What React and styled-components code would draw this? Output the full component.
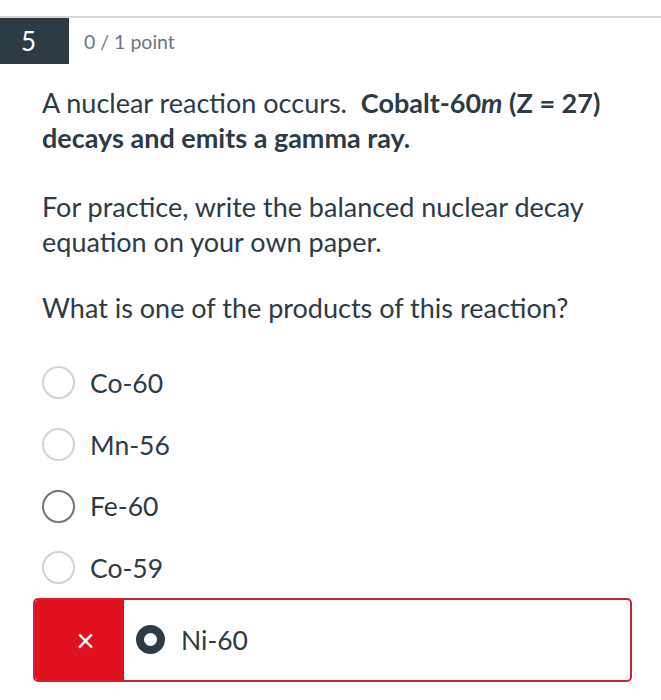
import React from 'react';
import styled, { createGlobalStyle } from 'styled-components';

const GlobalStyle = createGlobalStyle`
  body {
    margin: 0;
    background: #fff;
    font-family: Lato, "Open Sans", sans-serif;
    color: #2d3b45;
  }
`;

const Page = styled.div`
  width: 661px;
  height: 700px;
  padding-top: 16px;
  box-sizing: border-box;
`;

const Header = styled.div`
  display: flex;
  align-items: center;
  border-top: 2px solid #d4d4d4;
`;

const Number = styled.div`
  width: 69px;
  height: 46px;
  background: #2d3b45;
  color: #fff;
  font-size: 26px;
  display: flex;
  align-items: center;
  justify-content: center;
  padding-right: 12px;
  box-sizing: border-box;
`;

const Points = styled.div`
  margin-left: 15px;
  font-size: 19.5px;
  color: #6b7780;
`;

const Body = styled.div`
  padding: 21px 42px 0 42px;
`;

const Para = styled.p`
  margin: ${p => (p.$last ? '-3px 0 0' : '0 0 34px')};
  font-size: 27px;
  line-height: 35px;
`;

const Options = styled.div`
  display: flex;
  flex-direction: column;
  margin-top: 27px;
`;

const Option = styled.div`
  display: flex;
  align-items: center;
  height: 61.7px;
  font-size: 26.5px;
  gap: 15px;
`;

const Radio = styled.span`
  width: 33px;
  height: 33px;
  box-sizing: border-box;
  border-radius: 50%;
  border: 2px solid ${p => (p.$dark ? '#6f7478' : '#d0d2d4')};
`;

const Answer = styled.div`
  display: flex;
  margin: -1px 0 0 -9px;
  width: 599px;
  height: 84px;
  box-sizing: border-box;
  border: 2px solid #d21f33;
  border-radius: 5px;
  overflow: hidden;
`;

const Mark = styled.div`
  width: 89px;
  padding-left: 12px;
  box-sizing: border-box;
  background: #e0101f;
  color: #fff;
  font-size: 32px;
  display: flex;
  align-items: center;
  justify-content: center;
`;

const Chosen = styled.div`
  display: flex;
  align-items: center;
  gap: 16px;
  padding-left: 12px;
  font-size: 26.5px;
`;

const Filled = styled.span`
  width: 29px;
  height: 29px;
  box-sizing: border-box;
  border-radius: 50%;
  border: 8px solid #2d3b45;
`;

const choices = [
  { label: 'Co-60' },
  { label: 'Mn-56' },
  { label: 'Fe-60', dark: true },
  { label: 'Co-59' },
];

export default function App() {
  return (
    <Page>
      <GlobalStyle />
      <Header>
        <Number>5</Number>
        <Points>0 / 1 point</Points>
      </Header>
      <Body>
        <Para>
          A nuclear reaction occurs.&nbsp; <b>Cobalt-60<i>m</i> (Z = 27) decays and emits a gamma ray.</b>
        </Para>
        <Para>For practice, write the balanced nuclear decay equation on your own paper.</Para>
        <Para $last>What is one of the products of this reaction?</Para>
        <Options>
          {choices.map(c => (
            <Option key={c.label}>
              <Radio $dark={c.dark} />
              {c.label}
            </Option>
          ))}
        </Options>
        <Answer>
          <Mark>×</Mark>
          <Chosen>
            <Filled />
            Ni-60
          </Chosen>
        </Answer>
      </Body>
    </Page>
  );
}
